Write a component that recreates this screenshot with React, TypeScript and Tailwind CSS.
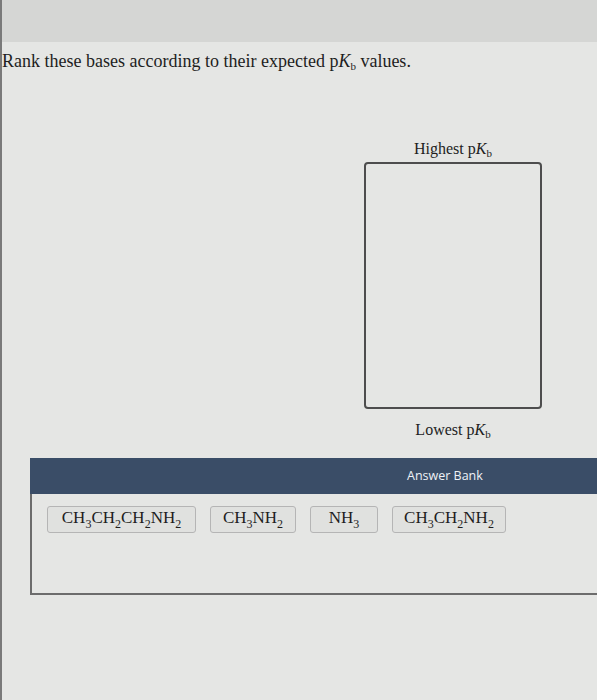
const bases: { parts: [string, string][]; w: string }[] = [
  { parts: [["CH", "3"], ["CH", "2"], ["CH", "2"], ["NH", "2"]], w: "w-[149px]" },
  { parts: [["CH", "3"], ["NH", "2"]], w: "w-[86px]" },
  { parts: [["NH", "3"]], w: "w-[68px]" },
  { parts: [["CH", "3"], ["CH", "2"], ["NH", "2"]], w: "w-[114px]" },
];

function Formula({ parts }: { parts: [string, string][] }) {
  return (
    <span>
      {parts.map(([el, n], i) => (
        <span key={i}>
          {el}
          <sub className="-bottom-[5px] text-[12px]">{n}</sub>
        </span>
      ))}
    </span>
  );
}

function PKb() {
  return (
    <span>
      p<i>K</i>
      <sub className="text-[11px]">b</sub>
    </span>
  );
}

export default function App() {
  return (
    <div className="min-h-[700px] w-[597px] overflow-hidden border-l-2 border-[#7a7a7a] bg-[#e5e6e4] font-['Liberation_Serif',serif] text-[#1e1e1e]">
      <div className="h-[42px] bg-[#d5d6d4]" />

      <p className="mt-[9px] text-[18px] leading-[20px]">
        Rank these bases according to their expected <PKb /> values.
      </p>

      {/* ranking target */}
      <div className="ml-[362px] mt-[68px] flex w-[178px] flex-col items-center">
        <div className="text-[16px] leading-[20px]">
          Highest <PKb />
        </div>
        <div className="mt-[3px] h-[247px] w-full rounded-[4px] border-2 border-[#4d4d4d]" />
        <div className="mt-[11px] text-[16px] leading-[20px]">
          Lowest <PKb />
        </div>
      </div>

      {/* answer bank */}
      <div className="ml-[28px] mt-[18px]">
        <div className="flex h-[36px] items-center bg-[#3a4d67] pl-[377px] font-['Open_Sans',sans-serif] text-[12.5px] text-[#eef2f6]">
          Answer Bank
        </div>
        <div className="h-[101px] border-b-2 border-l-2 border-[#6c6c6c] pl-[15px] pt-[12px]">
          <div className="flex gap-[14px]">
            {bases.map((b, i) => (
              <div
                key={i}
                className={`flex h-[27px] items-center justify-center rounded-[3px] border border-[#b5b5b5] bg-[#e0e1df] pb-[3px] text-[17px] leading-[20px] ${b.w}`}
              >
                <Formula parts={b.parts} />
              </div>
            ))}
          </div>
        </div>
      </div>
    </div>
  );
}
